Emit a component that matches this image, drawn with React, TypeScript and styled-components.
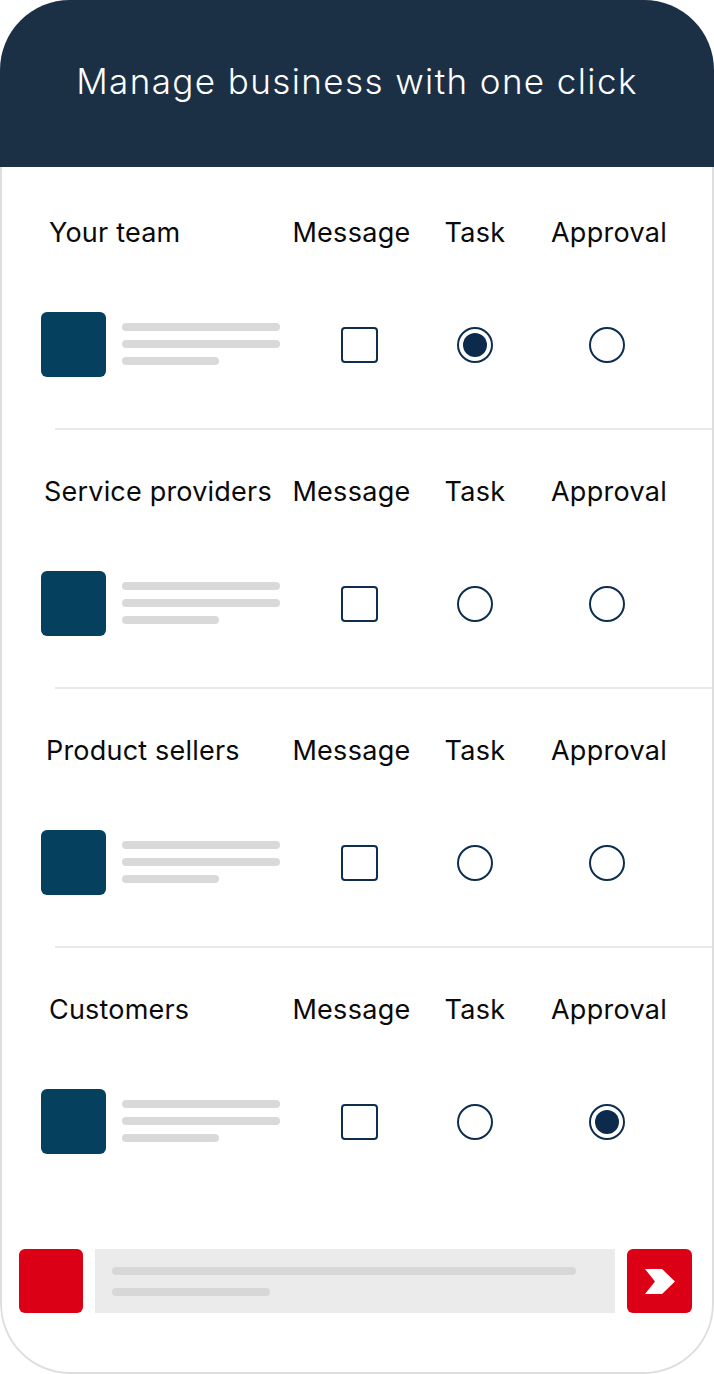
import React from "react";
import styled, { createGlobalStyle } from "styled-components";

const Global = createGlobalStyle`
  html, body { margin: 0; padding: 0; background: #ffffff; }
  body { font-family: "Inter", "Noto Sans", sans-serif; }
  * { box-sizing: border-box; }
`;

const Frame = styled.div`
  width: 714px;
  height: 1374px;
  border-radius: 70px;
  overflow: hidden;
  display: flex;
  flex-direction: column;
  background: #fff;
`;

const Header = styled.header`
  height: 167px;
  flex: none;
  background: #1b3045;
  display: flex;
  align-items: center;
  justify-content: center;
  padding-bottom: 5px;
`;

const Title = styled.h1`
  margin: 0;
  color: #fff;
  font-weight: 300;
  font-size: 35px;
  letter-spacing: 1.4px;
  white-space: nowrap;
`;

const Body = styled.main`
  flex: 1;
  border: 2px solid #dedede;
  border-top: none;
  border-radius: 0 0 70px 70px;
  padding-top: 4px;
  display: flex;
  flex-direction: column;
`;

const Section = styled.section<{ $last?: boolean }>`
  display: grid;
  grid-template-columns: 283px 133px 114px 154px 1fr;
  grid-template-rows: 36px 65px;
  row-gap: 62px;
  padding-top: 43px;
  padding-bottom: ${(p) => (p.$last ? 0 : 51)}px;
  align-items: center;
`;

const Separator = styled.hr`
  margin: 0 0 0 53px;
  border: none;
  height: 2px;
  background: #e9e9e9;
`;

const Label = styled.div<{ $indent: number }>`
  padding-left: ${(p) => p.$indent}px;
  font-size: 27px;
  letter-spacing: 0.2px;
  color: #0a0a0a;
  white-space: nowrap;
`;

const ColHead = styled.div`
  text-align: center;
  font-size: 27px;
  letter-spacing: 0.3px;
  color: #0a0a0a;
  white-space: nowrap;
`;

const Person = styled.div`
  display: flex;
  align-items: flex-start;
  gap: 16px;
  padding-left: 39px;
  height: 65px;
`;

const Avatar = styled.div`
  width: 65px;
  height: 65px;
  border-radius: 6px;
  background: #05405f;
  flex: none;
`;

const Lines = styled.div`
  display: flex;
  flex-direction: column;
  gap: 9px;
  padding-top: 11px;
`;

const Line = styled.div<{ $w: number; $tone?: string }>`
  width: ${(p) => p.$w}px;
  height: 8px;
  border-radius: 4px;
  background: ${(p) => p.$tone || "#d9d9d9"};
`;

const Cell = styled.div<{ $shift?: number }>`
  display: flex;
  justify-content: center;
  transform: translateX(${(p) => p.$shift || 0}px);
`;

const Check = styled.span`
  width: 37px;
  height: 36px;
  border: 2px solid #0d2e4e;
  border-radius: 4px;
`;

const Radio = styled.span<{ $on?: boolean }>`
  width: 36px;
  height: 36px;
  border: 2px solid #0d2e4e;
  border-radius: 50%;
  display: flex;
  align-items: center;
  justify-content: center;
  &::after {
    content: "";
    display: ${(p) => (p.$on ? "block" : "none")};
    width: 24px;
    height: 24px;
    border-radius: 50%;
    background: #0b2a4c;
  }
`;

const Footer = styled.div`
  margin-top: auto;
  margin-bottom: 59px;
  display: flex;
  gap: 12px;
  padding-left: 17px;
  height: 64px;
`;

const RedSquare = styled.div`
  width: 64px;
  height: 64px;
  border-radius: 6px;
  background: #dc0016;
  flex: none;
`;

const InputBox = styled.div`
  width: 520px;
  background: #ebebeb;
  padding: 18px 0 0 17px;
  display: flex;
  flex-direction: column;
  gap: 13px;
`;

const SendButton = styled.button`
  width: 65px;
  height: 64px;
  border: none;
  border-radius: 6px;
  background: #dc0016;
  padding: 0;
  display: flex;
  align-items: center;
  justify-content: center;
`;

type Row = { name: string; indent: number; task: boolean; approval: boolean };

const rows: Row[] = [
  { name: "Your team", indent: 47, task: true, approval: false },
  { name: "Service providers", indent: 42, task: false, approval: false },
  { name: "Product sellers", indent: 44, task: false, approval: false },
  { name: "Customers", indent: 47, task: false, approval: true },
];

export default function App() {
  return (
    <>
      <Global />
      <Frame>
        <Header>
          <Title>Manage business with one click</Title>
        </Header>
        <Body>
          {rows.map((r, i) => (
            <React.Fragment key={r.name}>
              <Section $last={i === rows.length - 1}>
                <Label $indent={r.indent}>{r.name}</Label>
                <ColHead>Message</ColHead>
                <ColHead>Task</ColHead>
                <ColHead>Approval</ColHead>
                <div />
                <Person>
                  <Avatar />
                  <Lines>
                    <Line $w={158} />
                    <Line $w={158} />
                    <Line $w={97} />
                  </Lines>
                </Person>
                <Cell $shift={8}>
                  <Check />
                </Cell>
                <Cell>
                  <Radio $on={r.task} />
                </Cell>
                <Cell $shift={-2}>
                  <Radio $on={r.approval} />
                </Cell>
                <div />
              </Section>
              {i < rows.length - 1 && <Separator />}
            </React.Fragment>
          ))}
          <Footer>
            <RedSquare />
            <InputBox>
              <Line $w={464} $tone="#d7d7d7" />
              <Line $w={158} $tone="#d7d7d7" />
            </InputBox>
            <SendButton aria-label="Send">
              <svg width="30" height="25" viewBox="0 0 30 25">
                <polygon points="0,0 17,0 30,12.5 17,25 0,25 10,12.5" fill="#fff" />
              </svg>
            </SendButton>
          </Footer>
        </Body>
      </Frame>
    </>
  );
}
